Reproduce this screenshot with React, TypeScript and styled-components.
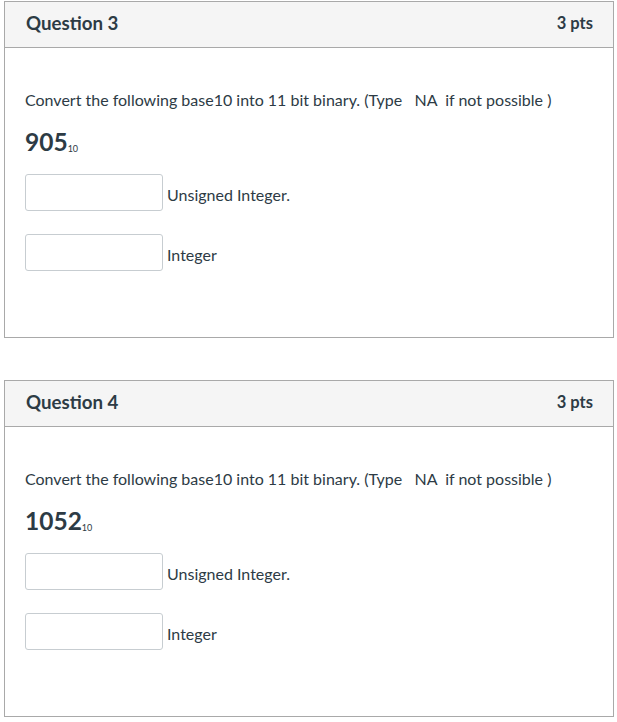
import React from "react";
import styled, { createGlobalStyle } from "styled-components";

const Global = createGlobalStyle`
  html, body { margin: 0; padding: 0; background: #ffffff; }
  body { font-family: Lato, "Open Sans", sans-serif; color: #2d3b45; }
`;

const Page = styled.div`
  display: flex;
  flex-direction: column;
  gap: 42px;
  padding: 1px 3px 0 4px;
`;

const Card = styled.section`
  width: 610px;
  box-sizing: border-box;
  border: 1px solid #a9a9a9;
  background: #fff;
`;

const Header = styled.header`
  display: flex;
  justify-content: space-between;
  align-items: center;
  height: 46px;
  padding: 0 20px 3px 21px;
  box-sizing: border-box;
  background: #f5f5f5;
  border-bottom: 1px solid #a9a9a9;
`;

const Title = styled.h2`
  margin: 0;
  font-size: 18.7px;
  font-weight: 700;
  color: #2d3b45;
`;

const Points = styled.div`
  font-size: 16.5px;
  font-weight: 700;
  color: #2d3b45;
`;

const Body = styled.div`
  padding: 42px 20px 0 20px;
  height: 289px;
  box-sizing: border-box;
`;

const Prompt = styled.p`
  margin: 0;
  font-size: 16px;
  line-height: 20px;
`;

const Number = styled.div`
  margin-top: 18px;
  font-size: 24.5px;
  font-weight: 700;
  line-height: 28px;
  sub {
    font-size: 9px;
    font-weight: 400;
    vertical-align: baseline;
    position: relative;
    top: 1px;
    margin-left: 0;
  }
`;

const Answers = styled.div`
  display: flex;
  flex-direction: column;
  gap: 23px;
  margin-top: 12px;
`;

const Row = styled.label`
  display: flex;
  align-items: flex-end;
  gap: 4px;
`;

const Input = styled.input`
  width: 138px;
  height: 37px;
  box-sizing: border-box;
  border: 1px solid #c7cdd1;
  border-radius: 3px;
  background: #fff;
  margin: 0;
`;

const Label = styled.span`
  font-size: 16px;
  line-height: 20px;
  padding-bottom: 6px;
`;

const questions = [
  { n: 3, value: "905" },
  { n: 4, value: "1052" },
];

export default function App() {
  return (
    <>
      <Global />
      <Page>
        {questions.map((q) => (
          <Card key={q.n}>
            <Header>
              <Title>Question {q.n}</Title>
              <Points>3 pts</Points>
            </Header>
            <Body>
              <Prompt>
                Convert the following base10 into 11 bit binary. (Type&nbsp;&nbsp;&nbsp;NA&nbsp;&nbsp;if not possible )
              </Prompt>
              <Number>
                {q.value}
                <sub>10</sub>
              </Number>
              <Answers>
                <Row>
                  <Input type="text" />
                  <Label>Unsigned Integer.</Label>
                </Row>
                <Row>
                  <Input type="text" />
                  <Label>Integer</Label>
                </Row>
              </Answers>
            </Body>
          </Card>
        ))}
      </Page>
    </>
  );
}
